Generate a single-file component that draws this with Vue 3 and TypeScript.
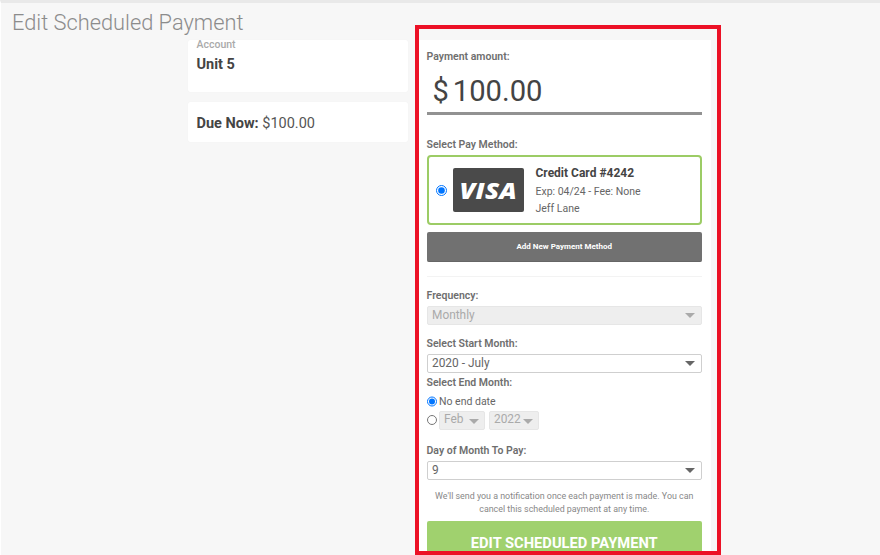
<script setup lang="ts">
const title: string = 'Edit Scheduled Payment'
</script>

<template>
  <div class="page">
    <h1 class="title">{{ title }}</h1>
    <div class="columns">
      <aside class="side">
        <section class="card account">
          <div class="account-label">Account</div>
          <div class="account-name">Unit 5</div>
        </section>
        <section class="card due"><b>Due Now:</b> $100.00</section>
      </aside>
      <main class="panel-wrap">
        <div class="panel">
          <label class="lbl first">Payment amount:</label>
          <div class="amount"><span class="dollar">$</span><span>100.00</span></div>

          <label class="lbl method">Select Pay Method:</label>
          <div class="pay-card">
            <input class="pay-radio" type="radio" name="pm" checked />
            <div class="visa"><span>VISA</span></div>
            <div class="pay-info">
              <div class="pay-title">Credit Card #4242</div>
              <div class="pay-line">Exp: 04/24 - Fee: None</div>
              <div class="pay-line">Jeff Lane</div>
            </div>
          </div>
          <button class="add-btn" type="button">Add New Payment Method</button>
          <hr class="rule" />

          <label class="lbl">Frequency:</label>
          <div class="select disabled"><span>Monthly</span><i class="caret"></i></div>

          <label class="lbl start">Select Start Month:</label>
          <div class="select"><span>2020 - July</span><i class="caret"></i></div>

          <label class="lbl end">Select End Month:</label>
          <div class="radio-row no-end">
            <input type="radio" name="end" checked />
            <span>No end date</span>
          </div>
          <div class="radio-row until">
            <input type="radio" name="end" />
            <div class="select disabled mini month"><span>Feb</span><i class="caret"></i></div>
            <div class="select disabled mini year"><span>2022</span><i class="caret"></i></div>
          </div>

          <label class="lbl day">Day of Month To Pay:</label>
          <div class="select"><span>9</span><i class="caret"></i></div>

          <p class="note">We'll send you a notification once each payment is made. You can cancel this scheduled payment at any time.</p>
          <button class="submit" type="button">EDIT SCHEDULED PAYMENT</button>
        </div>
        <div class="highlight"></div>
      </main>
    </div>
  </div>
</template>

<style>
html, body { margin: 0; height: 100%; overflow: hidden; background: #f7f7f7; }
</style>

<style scoped>
* { box-sizing: border-box; }
.page {
  width: 880px;
  height: 555px;
  overflow: hidden;
  background: #f7f7f7;
  border-top: 3px solid #e9e9e9;
  border-left: 1px solid #fff;
  font-family: Roboto, "Liberation Sans", sans-serif;
  color: #444;
}
.title {
  margin: 0;
  height: 37px;
  padding: 6px 0 0 11px;
  font-size: 21.8px;
  line-height: 27px;
  font-weight: 300;
  color: #8c8c8c;
}
.columns { display: flex; padding-left: 187px; align-items: flex-start; }
.side { width: 220px; display: flex; flex-direction: column; gap: 10px; margin-right: 11px; }
.card { background: #fff; border-radius: 2px; box-shadow: 0 0 1px rgba(0,0,0,.06); }
.account { height: 52px; padding: 0 8.5px; }
.account-label { font-size: 10.5px; line-height: 9px; font-weight: 500; color: #aaa; }
.account-name { font-size: 14.5px; line-height: 18px; font-weight: 700; color: #444; margin-top: 7px; }
.due { height: 40px; padding: 0 8.5px; font-size: 14.5px; line-height: 43px; color: #555; }
.due b { font-weight: 700; color: #444; }
.panel-wrap { position: relative; width: 292px; }
.panel {
  background: #fff;
  width: 292px;
  height: 530px;
  padding: 11px 9px 0 7.5px;
  overflow: hidden;
}
.lbl { display: block; font-size: 10.5px; line-height: 12px; font-weight: 600; color: #6e6e6e; }
.amount {
  display: flex;
  align-items: baseline;
  height: 49px;
  margin-top: 3px;
  padding: 4px 0 0 6px;
  border-bottom: 3px solid #929292;
  font-size: 29.2px;
  line-height: 42px;
  color: #444;
}
.dollar { margin-right: 4px; font-size: 29px; }
.method { margin-top: 24px; }
.pay-card {
  display: flex;
  align-items: center;
  height: 70px;
  margin-top: 4px;
  padding: 0 7px;
  border: 2px solid #9ccc65;
  border-radius: 4px;
  background: #fff;
}
.pay-radio { width: 11px; height: 11px; margin: 0 6px 0 0; }
.visa {
  display: flex;
  align-items: center;
  justify-content: center;
  width: 71px;
  height: 44px;
  background: #4a4a4a;
  border-radius: 2px;
}
.visa span {
  display: block;
  font-family: "Open Sans", "Liberation Sans", sans-serif;
  font-size: 23.5px;
  font-weight: 800;
  font-style: italic;
  color: #fff;
  letter-spacing: 0.2px;
  transform: scaleX(1.1);
}
.pay-info { margin-left: 12px; padding-top: 2px; }
.pay-title { font-size: 12px; line-height: 16px; font-weight: 700; color: #444; }
.pay-line { font-size: 10.5px; line-height: 16px; color: #666; margin-top: 1px; }
.pay-title + .pay-line { margin-top: 3px; }
.add-btn {
  display: block;
  width: 100%;
  height: 30px;
  margin-top: 7px;
  border: 0;
  border-bottom: 1px solid #666;
  border-radius: 2px;
  background: #717171;
  color: #fff;
  font-family: inherit;
  font-size: 8px;
  font-weight: 700;
}
.rule { margin: 14px 0 13px; border: 0; border-top: 1px solid #f3f3f3; }
.select {
  position: relative;
  display: flex;
  align-items: center;
  height: 19px;
  margin-top: 4px;
  padding: 0 4.5px 2px;
  border: 1px solid #cfcfcf;
  border-radius: 2px;
  background: #fff;
  font-size: 11.9px;
  color: #666;
}
.caret {
  position: absolute;
  right: 6px;
  top: 6px;
  width: 0;
  height: 0;
  border-left: 5px solid transparent;
  border-right: 5px solid transparent;
  border-top: 5px solid #666;
}
.select.disabled { background: #eee; border-color: #e6e6e6; color: #aaa; }
.select.disabled .caret { border-top-color: #aaa; }
.start { margin-top: 13px; }
.end { margin-top: 4px; }
.radio-row { display: flex; align-items: center; font-size: 10.5px; color: #666; }
.radio-row input { width: 10.5px; height: 10.5px; margin: 0 2px 0 0; }
.no-end { height: 13px; margin-top: 6px; }
.until { margin-top: 2px; height: 20px; }
.mini { margin-top: 0; }
.month { width: 46px; margin-right: 4px; padding-left: 4px; }
.year { width: 50px; padding-left: 4px; }
.mini .caret { top: 7px; right: 5px; }
.day { margin-top: 15px; }
.note {
  margin: 10px 0 0;
  font-size: 8.9px;
  line-height: 13px;
  text-align: center;
  color: #888;
}
.submit {
  display: block;
  width: 100%;
  height: 44px;
  margin-top: 5px;
  padding: 0;
  border: 0;
  border-radius: 2px;
  background: #a0d16e;
  color: #fff;
  font-family: inherit;
  font-size: 14.7px;
  font-weight: 700;
}
.highlight {
  position: absolute;
  left: -4px;
  top: -15px;
  width: 306px;
  height: 530px;
  border: 4px solid #ec1126;
  pointer-events: none;
}
</style>
